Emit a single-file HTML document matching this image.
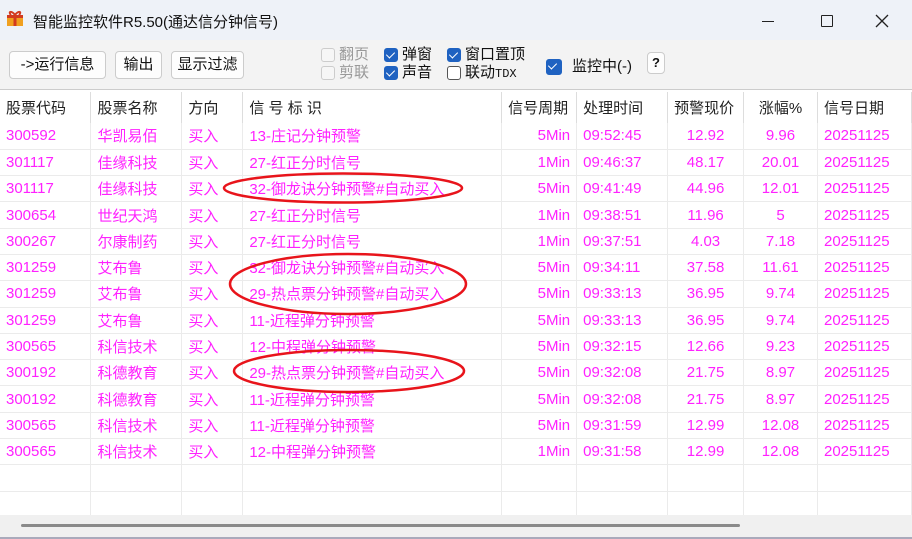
<!DOCTYPE html><html><head><meta charset="utf-8"><style>
*{margin:0;padding:0;box-sizing:border-box}
body{width:912px;height:539px;overflow:hidden;background:#fff;font-family:"Liberation Sans","Noto Sans CJK SC",sans-serif;position:relative;font-size:14px}
.abs{position:absolute}
#title{left:0;top:0;width:912px;height:40px;background:#eef2f8}
#tb{left:0;top:40px;width:912px;height:50px;background:#f3f3f3;border-bottom:1px solid #ccc}
.btn{position:absolute;top:11px;height:28px;border:1px solid #ccc;border-radius:4px;background:#fdfdfd;font-size:15px;line-height:26px;text-align:center;color:#111}
.cb{position:absolute;width:14px;height:14px;border-radius:3px}
.on{background:#1f62c1;border:1px solid #1f62c1}
.on:after{content:"";position:absolute;left:3px;top:1px;width:4px;height:7px;border:solid #fff;border-width:0 1.5px 1.5px 0;transform:rotate(45deg)}
.off{background:#fff;border:1px solid #555}
.dis{background:#f6f6f6;border:1px solid #ccc}
.lbl{position:absolute;font-size:15px;color:#111;line-height:16px}
table{position:absolute;left:0;top:92px;border-collapse:collapse;table-layout:fixed}
td,th{height:26.3px;border-right:1px solid #ebebeb;border-bottom:1px solid #ebebeb;font-size:15px;white-space:nowrap;overflow:hidden;padding:0 6px;font-weight:normal}
th{height:31px;text-align:left;color:#222;border-right:1px solid #ddd;border-bottom:none}
td{color:#ff21ff}
.r{text-align:right}.c{text-align:center}
#sb{left:0;top:515px;width:912px;height:22px;background:#f0f0f0}
</style></head><body>
<div id="title" class="abs">
<svg class="abs" style="left:6px;top:9px" width="18" height="18"><rect x="1" y="6" width="16" height="11" fill="#f0a020"/><rect x="1" y="6" width="16" height="3" fill="#d23a20"/><rect x="7.5" y="6" width="3" height="11" fill="#d23a20"/><path d="M9 6 C5 1 2 3 5 6 M9 6 C13 1 16 3 13 6" stroke="#d23a20" stroke-width="2" fill="none"/></svg>
<div class="abs" style="left:33px;top:11px;font-size:15px;color:#111">智能监控软件R5.50(通达信分钟信号)</div>
<div class="abs" style="left:762px;top:21px;width:12px;height:1px;background:#222"></div>
<div class="abs" style="left:821px;top:15px;width:12px;height:12px;border:1.3px solid #222;border-radius:1px"></div>
<svg class="abs" style="left:875px;top:14px" width="14" height="14"><path d="M1 1L13 13M13 1L1 13" stroke="#222" stroke-width="1.3"/></svg>
</div>
<div id="tb" class="abs">
<div class="btn" style="left:9px;width:97px">-&gt;运行信息</div>
<div class="btn" style="left:115px;width:47px">输出</div>
<div class="btn" style="left:171px;width:73px">显示过滤</div>
<div class="cb dis" style="left:321px;top:8px"></div><div class="lbl" style="left:339px;top:7px;color:#999">翻页</div>
<div class="cb dis" style="left:321px;top:26px"></div><div class="lbl" style="left:339px;top:25px;color:#999">剪联</div>
<div class="cb on" style="left:384px;top:8px"></div><div class="lbl" style="left:402px;top:7px">弹窗</div>
<div class="cb on" style="left:384px;top:26px"></div><div class="lbl" style="left:402px;top:25px">声音</div>
<div class="cb on" style="left:447px;top:8px"></div><div class="lbl" style="left:465px;top:7px">窗口置顶</div>
<div class="cb off" style="left:447px;top:26px"></div><div class="lbl" style="left:465px;top:25px">联动<span style="font-family:'Liberation Mono';font-size:12px">TDX</span></div>
<div class="cb on" style="left:546px;top:19px;width:16px;height:16px"></div><div class="lbl" style="left:572px;top:19px">监控中(-)</div>
<div class="btn" style="left:647px;top:12px;width:18px;height:22px;line-height:20px;font-weight:bold;font-size:13px">?</div>
</div>
<table>
<colgroup><col style="width:91px"><col style="width:91px"><col style="width:61px"><col style="width:259px"><col style="width:75px"><col style="width:91px"><col style="width:76px"><col style="width:74px"><col style="width:94px"></colgroup>
<tr><th>股票代码</th><th>股票名称</th><th>方向</th><th>信 号 标 识</th><th>信号周期</th><th>处理时间</th><th>预警现价</th><th class="c">涨幅%</th><th>信号日期</th></tr>
<tr><td>300592</td><td>华凯易佰</td><td>买入</td><td>13-庄记分钟预警</td><td class="r">5Min</td><td>09:52:45</td><td class="c">12.92</td><td class="c">9.96</td><td>20251125</td></tr>
<tr><td>301117</td><td>佳缘科技</td><td>买入</td><td>27-红正分时信号</td><td class="r">1Min</td><td>09:46:37</td><td class="c">48.17</td><td class="c">20.01</td><td>20251125</td></tr>
<tr><td>301117</td><td>佳缘科技</td><td>买入</td><td>32-御龙诀分钟预警#自动买入</td><td class="r">5Min</td><td>09:41:49</td><td class="c">44.96</td><td class="c">12.01</td><td>20251125</td></tr>
<tr><td>300654</td><td>世纪天鸿</td><td>买入</td><td>27-红正分时信号</td><td class="r">1Min</td><td>09:38:51</td><td class="c">11.96</td><td class="c">5</td><td>20251125</td></tr>
<tr><td>300267</td><td>尔康制药</td><td>买入</td><td>27-红正分时信号</td><td class="r">1Min</td><td>09:37:51</td><td class="c">4.03</td><td class="c">7.18</td><td>20251125</td></tr>
<tr><td>301259</td><td>艾布鲁</td><td>买入</td><td>32-御龙诀分钟预警#自动买入</td><td class="r">5Min</td><td>09:34:11</td><td class="c">37.58</td><td class="c">11.61</td><td>20251125</td></tr>
<tr><td>301259</td><td>艾布鲁</td><td>买入</td><td>29-热点票分钟预警#自动买入</td><td class="r">5Min</td><td>09:33:13</td><td class="c">36.95</td><td class="c">9.74</td><td>20251125</td></tr>
<tr><td>301259</td><td>艾布鲁</td><td>买入</td><td>11-近程弹分钟预警</td><td class="r">5Min</td><td>09:33:13</td><td class="c">36.95</td><td class="c">9.74</td><td>20251125</td></tr>
<tr><td>300565</td><td>科信技术</td><td>买入</td><td>12-中程弹分钟预警</td><td class="r">5Min</td><td>09:32:15</td><td class="c">12.66</td><td class="c">9.23</td><td>20251125</td></tr>
<tr><td>300192</td><td>科德教育</td><td>买入</td><td>29-热点票分钟预警#自动买入</td><td class="r">5Min</td><td>09:32:08</td><td class="c">21.75</td><td class="c">8.97</td><td>20251125</td></tr>
<tr><td>300192</td><td>科德教育</td><td>买入</td><td>11-近程弹分钟预警</td><td class="r">5Min</td><td>09:32:08</td><td class="c">21.75</td><td class="c">8.97</td><td>20251125</td></tr>
<tr><td>300565</td><td>科信技术</td><td>买入</td><td>11-近程弹分钟预警</td><td class="r">5Min</td><td>09:31:59</td><td class="c">12.99</td><td class="c">12.08</td><td>20251125</td></tr>
<tr><td>300565</td><td>科信技术</td><td>买入</td><td>12-中程弹分钟预警</td><td class="r">1Min</td><td>09:31:58</td><td class="c">12.99</td><td class="c">12.08</td><td>20251125</td></tr>
<tr><td></td><td></td><td></td><td></td><td></td><td></td><td></td><td></td><td></td></tr>
<tr><td></td><td></td><td></td><td></td><td></td><td></td><td></td><td></td><td></td></tr>
</table>
<svg class="abs" style="left:0;top:0" width="912" height="539">
<ellipse cx="343" cy="188" rx="119" ry="14.5" fill="none" stroke="#e8141b" stroke-width="2.5"/>
<ellipse cx="348" cy="284" rx="118" ry="30" fill="none" stroke="#e8141b" stroke-width="2.5"/>
<ellipse cx="349" cy="371" rx="115" ry="21" fill="none" stroke="#e8141b" stroke-width="2.5"/>
</svg>
<div id="sb" class="abs"><div class="abs" style="left:21px;top:9px;width:719px;height:3px;background:#8a8a8a;border-radius:2px"></div></div>
<div class="abs" style="left:0;top:537px;width:912px;height:2px;background:#aab"></div>
</body></html>
